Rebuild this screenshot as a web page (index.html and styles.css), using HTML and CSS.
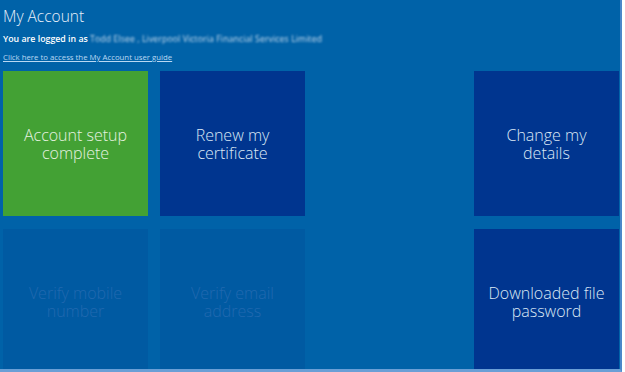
FILE: index.html
```html
<!DOCTYPE html>
<html>
<head>
<meta charset="utf-8">
<link rel="stylesheet" href="styles.css">
</head>
<body>
<div class="page">
  <h1 class="title">My Account</h1>
  <p class="logged">You are logged in as <span class="blur">Todd Elsee , Liverpool Victoria Financial Services Limited</span></p>
  <a class="guide" href="#">Click here to access the My Account user guide</a>
  <div class="grid">
    <div class="tile green">Account setup<br>complete</div>
    <div class="tile dark">Renew my<br>certificate</div>
    <div class="tile empty"></div>
    <div class="tile dark">Change my<br>details</div>
    <div class="tile faded">Verify mobile<br>number</div>
    <div class="tile faded">Verify email<br>address</div>
    <div class="tile empty"></div>
    <div class="tile dark">Downloaded file<br>password</div>
  </div>
</div>
</body>
</html>
```
FILE: styles.css
```css
html, body {
  margin: 0;
  padding: 0;
  background: #ffffff;
}
body {
  font-family: "Open Sans", "Noto Sans", sans-serif;
  overflow: hidden;
}
.page {
  width: 620px;
  height: 369px;
  background: #0062a8;
  border-right: 2px solid #4b87c9;
  border-bottom: 3px solid #6a9fd6;
  overflow: hidden;
  color: #ffffff;
}
.title {
  margin: 0;
  padding: 5px 0 0 3px;
  font-size: 15.5px;
  font-weight: 300;
  line-height: 22px;
  color: #e8f0fa;
}
.logged {
  margin: 6px 0 0 0;
  padding-left: 3px;
  font-size: 8.8px;
  font-weight: 600;
  line-height: 12px;
  color: #ffffff;
}
.blur {
  font-weight: 400;
  color: #c8dcef;
  filter: blur(1.2px);
  display: inline-block;
  font-size: 8.7px;
  letter-spacing: 0.1px;
  margin-left: 0;
}
.guide {
  display: block;
  margin: 6px 0 0 3px;
  font-size: 7.8px;
  line-height: 12px;
  color: #b9d8f3;
  text-decoration: underline;
}
.grid {
  display: grid;
  grid-template-columns: repeat(4, 145px);
  grid-template-rows: 145px 145px;
  column-gap: 12px;
  row-gap: 13px;
  margin: 8px 0 0 3px;
}
.tile {
  display: flex;
  align-items: center;
  justify-content: center;
  text-align: center;
  font-size: 16px;
  font-weight: 300;
  line-height: 18px;
  color: #dbe8f5;
}
.green {
  background: #43a134;
  color: #e6f2e0;
}
.dark {
  background: #00358f;
}
.faded {
  background: #005aa2;
  color: #2169b0;
}
.empty {
  background: transparent;
}
```
